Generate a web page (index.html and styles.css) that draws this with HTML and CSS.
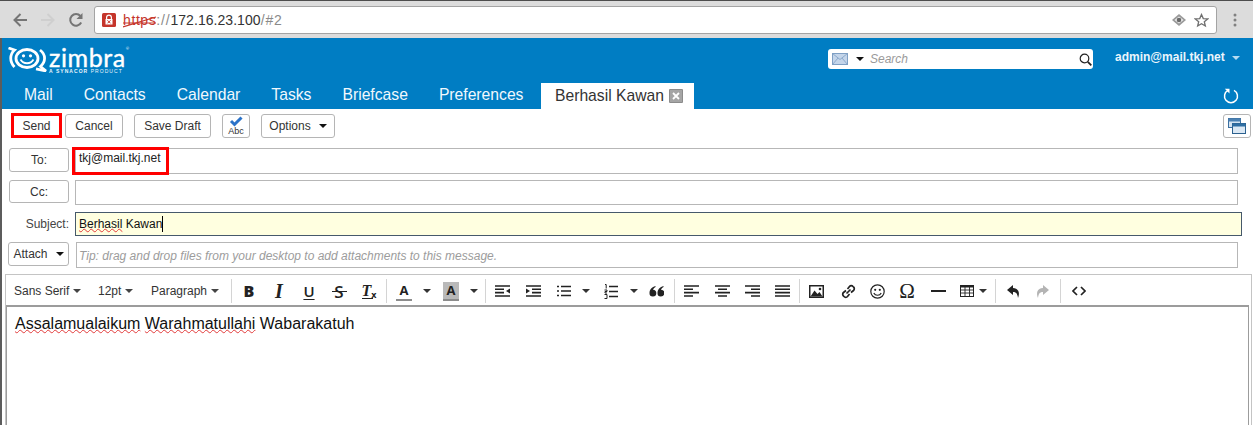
FILE: index.html
```html
<!DOCTYPE html>
<html lang="en">
<head>
<meta charset="utf-8">
<title>Zimbra</title>
<link rel="stylesheet" href="styles.css">
</head>
<body>
<header class="chrome">
  <svg class="nav-icon" viewBox="0 0 16 16" width="16" height="16"><path d="M15 8H3M8.500 2 2.500 8l6 6" fill="none" stroke="#757575" stroke-width="2"/></svg>
  <svg class="nav-icon" viewBox="0 0 16 16" width="16" height="16"><path d="M1 8H13M7.500 2l6 6-6 6" fill="none" stroke="#cfcfcf" stroke-width="2"/></svg>
  <svg class="nav-icon" viewBox="0 0 16 16" width="16" height="16"><path d="M13.200 10.500A5.800 5.800 0 1 1 12.400 4" fill="none" stroke="#757575" stroke-width="2"/><path d="M14.500 1v6h-6z" fill="#757575"/></svg>
  <div class="omnibox">
    <svg class="lock" viewBox="0 0 14 14" width="14" height="14"><rect width="14" height="14" rx="1.500" fill="#c5352b"/><path d="M4.600 6V4.600a2.400 2.400 0 0 1 4.800 0V6" fill="none" stroke="#fff" stroke-width="1.200"/><rect x="3.500" y="6" width="7" height="5.500" fill="#fff"/><path d="m5.500 7.300 3 3m0-3-3 3" stroke="#c5352b"/></svg>
    <span class="url"><span class="scheme">https<svg class="strike" viewBox="0 0 34 14" width="34" height="14"><path d="M0 13 33 3" stroke="#c5352b" stroke-width="1.200"/><path d="M0 9h33" stroke="#c5352b" stroke-width="1"/></svg></span><span class="dim dim-sep">://</span>172.16.23.100<span class="dim dim-path">/#2</span></span>
    <svg class="omni-eye" viewBox="0 0 14 12" width="14" height="12"><path d="M0 6 7 0l7 6-7 6z" fill="#9a9a9a"/><path d="M2.500 6 7 2.500 11.500 6 7 9.500z" fill="#eee"/><circle cx="7" cy="6" r="2.300" fill="#6a6a6a"/></svg>
    <svg class="omni-star" viewBox="0 0 16 16" width="15" height="15"><path d="m8 1.600 1.900 4.300 4.700.4-3.600 3 1.100 4.600L8 11.500l-4.100 2.400L5 9.300l-3.600-3 4.700-.4z" fill="none" stroke="#707070" stroke-width="1.400"/></svg>
  </div>
  <svg class="chrome-menu" viewBox="0 0 4 14" width="4" height="14"><circle cx="2" cy="2" r="1.500" fill="#808080"/><circle cx="2" cy="7" r="1.500" fill="#808080"/><circle cx="2" cy="12" r="1.500" fill="#808080"/></svg>
</header>

<div class="app">
  <div class="masthead">
    <div class="brand">
      <svg class="brand-mark" viewBox="0 0 39 25" width="39" height="25">
        <path d="M.5 1 6.500 3C1.500 7.500 1.500 15 6.500 20M32 3c6 4.500 6 11.500.5 16.500L38 24l-10-2.200" fill="none" stroke="#fff" stroke-width="2.800"/>
        <ellipse cx="19" cy="11.500" rx="11" ry="9" fill="none" stroke="#fff" stroke-width="2.800"/>
        <circle cx="15.500" cy="8.800" r="1.600" fill="#fff"/><circle cx="22.500" cy="8.800" r="1.600" fill="#fff"/>
        <path d="M12.500 12.500c3 5 10 5 13 0" fill="none" stroke="#fff" stroke-width="1.800"/>
      </svg>
      <div class="brand-text">
        <div class="brand-name">zimbra<span class="brand-reg">®</span></div>
        <div class="brand-sub">A SYNACOR <span class="brand-light">PRODUCT</span></div>
      </div>
    </div>
    <div class="search">
      <svg class="search-mail" viewBox="0 0 16 12" width="16" height="12"><rect x=".5" y=".5" width="15" height="11" fill="#c4d5ea" stroke="#7f9fc4"/><path d="m.5.5 7.500 6 7.500-6M.5 11.500l5.500-6.500M15.500 11.500 10 5" fill="none" stroke="#7f9fc4" stroke-width=".8"/></svg>
      <span class="caret caret-search"></span>
      <span class="search-text">Search</span>
      <svg class="search-glass" viewBox="0 0 13 13" width="13" height="13"><circle cx="5.500" cy="5.500" r="4.300" fill="none" stroke="#222" stroke-width="1.200"/><path d="m8.800 8.800 3.500 3.500" stroke="#222" stroke-width="1.800"/></svg>
    </div>
    <div class="account">admin@mail.tkj.net<span class="caret caret-account"></span></div>
  </div>
  <nav class="tabs">
    <span class="tab">Mail</span>
    <span class="tab">Contacts</span>
    <span class="tab">Calendar</span>
    <span class="tab">Tasks</span>
    <span class="tab">Briefcase</span>
    <span class="tab">Preferences</span>
    <span class="tab tab-active">Berhasil Kawan<span class="tab-close"><svg viewBox="0 0 14 14" width="14" height="14"><rect width="14" height="14" rx="1" fill="#8c8c8c"/><rect x="1" y="1" width="12" height="12" fill="#a5a5a5"/><path d="m4 4 6 6m0-6-6 6" stroke="#fff" stroke-width="1.800"/></svg></span></span>
    <svg class="refresh" viewBox="0 0 16 16" width="16" height="16"><path d="M5 2.400a6.500 6.500 0 1 0 6 0" fill="none" stroke="#fff" stroke-width="1.500"/><path d="M1.800 .8h4.700v4.600z" fill="#fff"/></svg>
  </nav>

  <div class="toolbar">
    <button class="btn btn-send">Send</button>
    <button class="btn btn-cancel">Cancel</button>
    <button class="btn btn-draft">Save Draft</button>
    <button class="btn btn-spell"><svg viewBox="0 0 20 20" width="20" height="20"><path d="m5 5 3.500 3.500L15.500 1.500" fill="none" stroke="#2b73c9" stroke-width="3"/><text x="10" y="18" class="abc">Abc</text></svg></button>
    <button class="btn btn-options">Options<span class="caret"></span></button>
    <button class="btn btn-window"><svg viewBox="0 0 18 16" width="18" height="16"><rect x=".5" y=".5" width="12" height="9" fill="#d5e4f2" stroke="#3c6f9f"/><rect x=".5" y=".5" width="12" height="3" fill="#4b81b3"/><rect x="4.500" y="5.500" width="13" height="10" fill="#dbe8f4" stroke="#2b618f"/><rect x="4.500" y="5.500" width="13" height="3" fill="#2f6ea3"/></svg></button>
  </div>

  <form class="fields">
    <div class="row">
      <button type="button" class="btn btn-label">To:</button>
      <div class="field field-to"><span class="field-text">tkj@mail.tkj.net</span><span class="hl hl-to"></span></div>
    </div>
    <div class="row">
      <button type="button" class="btn btn-label btn-cc">Cc:</button>
      <div class="field field-cc"></div>
    </div>
    <div class="row row-subject">
      <span class="subject-label">Subject:</span>
      <div class="field field-subject"><span class="misspelled">Berhasil</span>&nbsp;Kawan<span class="cursor"></span></div>
    </div>
    <div class="row">
      <button type="button" class="btn btn-attach">Attach<span class="caret"></span></button>
      <div class="field field-tip">Tip: drag and drop files from your desktop to add attachments to this message.</div>
    </div>
  </form>

  <section class="editor">
    <div class="mce-bar">
      <span class="mce-select mce-font">Sans Serif<span class="caret caret-grey"></span></span>
      <span class="mce-select mce-size">12pt<span class="caret caret-grey"></span></span>
      <span class="mce-select mce-block">Paragraph<span class="caret caret-grey"></span></span>
      <i class="sep"></i>
      <span class="slot s30 first t-b">B</span>
      <span class="slot s30 t-i">I</span>
      <span class="slot s30 t-u">U</span>
      <span class="slot s30 t-s">S</span>
      <span class="slot s30 t-x">T<small>x</small></span>
      <i class="sep after2"></i>
      <span class="slot s34"><span class="a-letter">A</span></span>
      <span class="slot s12"><span class="caret caret-icon"></span></span>
      <span class="slot s36"><span class="a-letter a-bg">A</span></span>
      <span class="slot s10"><span class="caret caret-icon"></span></span>
      <i class="sep after6"></i>
      <span class="slot s32"><svg viewBox="0 0 15 12" width="15" height="12"><path d="M0 1h15M0 4.300h9M0 7.600h9M0 11h15" stroke="#222" stroke-width="1.600"/><path d="M15 3.500v5L11 6z" fill="#222"/></svg></span>
      <span class="slot s30"><svg viewBox="0 0 15 12" width="15" height="12"><path d="M0 1h15M6 4.300h9M6 7.600h9M0 11h15" stroke="#222" stroke-width="1.600"/><path d="M0 3.500v5L4 6z" fill="#222"/></svg></span>
      <span class="slot s32"><svg viewBox="0 0 14 12" width="14" height="12"><path d="M4 1.500h10M4 6h10M4 10.500h10" stroke="#222" stroke-width="1.600"/><path d="M0 1.500h2M0 6h2M0 10.500h2" stroke="#222" stroke-width="1.600"/></svg></span>
      <span class="slot s12"><span class="caret caret-icon"></span></span>
      <span class="slot s38"><svg viewBox="0 0 14 15" width="14" height="15"><path d="M5 2.500h9M5 7.500h9M5 12.500h9" stroke="#222" stroke-width="1.600"/><path d="M1 .5h1.200v4M.5 6h2.500v1.500H1v1.500h2M.5 10.500H3v4H.5" fill="none" stroke="#222"/></svg></span>
      <span class="slot s8"><span class="caret caret-icon"></span></span>
      <span class="slot s36"><svg viewBox="0 0 15 11" width="15" height="11"><path d="M6.500 0C3 1 .5 3.500.5 7a3.400 3.400 0 1 0 3.500-3.300c.7-1.400 1.500-2.200 2.500-2.700zM14.500 0c-3.500 1-6 3.500-6 7a3.400 3.400 0 1 0 3.500-3.300c.7-1.400 1.500-2.200 2.500-2.700z" fill="#222"/></svg></span>
      <i class="sep"></i>
      <span class="slot s32"><svg viewBox="0 0 15 12" width="15" height="12"><path d="M0 1h15M0 4.300h9M0 7.600h15M0 11h9" stroke="#222" stroke-width="1.600"/></svg></span>
      <span class="slot s30"><svg viewBox="0 0 15 12" width="15" height="12"><path d="M0 1h15M3 4.300h9M0 7.600h15M3 11h9" stroke="#222" stroke-width="1.600"/></svg></span>
      <span class="slot s30"><svg viewBox="0 0 15 12" width="15" height="12"><path d="M0 1h15M6 4.300h9M0 7.600h15M6 11h9" stroke="#222" stroke-width="1.600"/></svg></span>
      <span class="slot s30"><svg viewBox="0 0 15 12" width="15" height="12"><path d="M0 1h15M0 4.300h15M0 7.600h15M0 11h15" stroke="#222" stroke-width="1.600"/></svg></span>
      <i class="sep after2"></i>
      <span class="slot s33"><svg viewBox="0 0 15 13" width="15" height="13"><rect width="15" height="13" fill="#222"/><rect x="1.500" y="1.500" width="12" height="10" fill="#fff"/><path d="m1.500 11.500 4-6 3 3.500 2-2 3 4.500z" fill="#222"/><circle cx="11" cy="4" r="1.300" fill="#222"/></svg></span>
      <span class="slot s30"><svg viewBox="0 0 15 15" width="15" height="15"><path d="m6.500 5 2-2.500a2.300 2.300 0 0 1 3.500 0l.5.500a2.300 2.300 0 0 1 0 3.500L10 8.500M8.500 10l-2 2.500a2.300 2.300 0 0 1-3.500 0l-.5-.5a2.300 2.300 0 0 1 0-3.500L5 6.500M5.500 9.500l4-4" fill="none" stroke="#222" stroke-width="1.700"/></svg></span>
      <span class="slot s28"><svg viewBox="0 0 15 15" width="15" height="15"><circle cx="7.500" cy="7.500" r="6.700" fill="none" stroke="#222" stroke-width="1.200"/><circle cx="5.200" cy="5.800" r="1.100" fill="#222"/><circle cx="9.800" cy="5.800" r="1.100" fill="#222"/><path d="M3.800 9c1.500 3 6 3 7.400 0" fill="none" stroke="#222" stroke-width="1.200"/></svg></span>
      <span class="slot s32 omega">Ω</span>
      <span class="slot s30"><span class="hr-ico"></span></span>
      <svg class="table-ico" viewBox="0 0 14 12" width="14" height="12"><rect x=".5" y=".5" width="13" height="11" fill="none" stroke="#222"/><path d="M0 1.500h14" stroke="#222" stroke-width="2"/><path d="M0 5h14M0 8h14M5 0v12M9.500 0v12" stroke="#222" stroke-width=".9"/></svg>
      <span class="caret caret-icon caret-table"></span>
      <i class="sep"></i>
      <span class="slot s35"><svg viewBox="0 0 13 13" width="13" height="13"><path d="M6 0 0 5l6 5V7c3 0 4.500 1.500 5 6 2-5 1-9.500-5-10z" fill="#222"/></svg></span>
      <span class="slot s23"><svg viewBox="0 0 13 13" width="13" height="13"><path d="m7 0 6 5-6 5V7c-3 0-4.500 1.500-5 6-2-5-1-9.500 5-10z" fill="#b4b4b4"/></svg></span>
      <i class="sep after6"></i>
      <span class="slot s35"><svg viewBox="0 0 14 10" width="14" height="10"><path d="M5 1 1 5l4 4M9 1l4 4-4 4" fill="none" stroke="#222" stroke-width="1.700"/></svg></span>
    </div>
    <div class="mce-body"><span class="misspelled">Assalamualaikum</span> <span class="misspelled">Warahmatullahi</span> Wabarakatuh</div>
  </section>
  <span class="hl hl-send"></span>
</div>
</body>
</html>
```
FILE: styles.css
```css
* { box-sizing: border-box; }
html, body { margin: 0; padding: 0; height: 425px; overflow: hidden; background: #fff; }
body { font-family: "Liberation Sans", Arial, sans-serif; color: #333; }
button { font-family: inherit; margin: 0; cursor: default; }

.chrome { height: 38px; background: #dcdcdc; border-top: 1px solid #4d4d4d; display: flex; align-items: center; padding-left: 12px; }
.nav-icon { margin-right: 12px; flex: none; }
.omnibox { flex: none; margin-left: -2px; margin-top: 1px; width: 1123px; height: 28px; background: #fff; border: 1px solid #a4a4a4; border-radius: 3px; display: flex; align-items: center; padding-left: 7px; }
.lock { flex: none; }
.url { font-size: 14px; letter-spacing: .05px; color: #333; margin-left: 7px; }
.scheme { position: relative; color: #c5352b; letter-spacing: .6px; }
.strike { position: absolute; left: 0; top: 2px; }
.dim { color: #8a8a8a; }
.dim-sep { letter-spacing: .8px; }
.dim-path { letter-spacing: .9px; }
.omni-eye { margin-left: auto; margin-right: 8px; }
.omni-star { margin-right: 7px; }
.chrome-menu { margin-left: 16px; flex: none; }

.app { border-left: 2px solid #5c5c5c; height: 387px; position: relative; display: flex; flex-direction: column; }
.masthead { height: 39px; flex: none; background: #007dc3; display: flex; align-items: flex-start; padding-left: 6px; padding-top: 9px; }
.brand { display: flex; align-items: flex-start; gap: 2px; width: 120px; flex: none; }
.brand-mark { flex: none; }
.brand-name { color: #fff; font-family: Lato, "Liberation Sans", sans-serif; font-size: 25px; line-height: 20px; height: 22px; letter-spacing: .6px; white-space: nowrap; -webkit-text-stroke: .4px #fff; }
.brand-reg { font-size: 4px; line-height: 4px; vertical-align: top; -webkit-text-stroke: 0; }
.brand-sub { color: #eaf5fc; font-size: 5px; line-height: 5px; font-weight: bold; letter-spacing: 1.050px; white-space: nowrap; }
.brand-light { font-weight: normal; }
.search { margin-left: 700px; margin-top: 2px; width: 265px; height: 20px; background: #fff; border-radius: 3px; display: flex; align-items: center; padding-left: 4px; flex: none; }
.search-mail { flex: none; }
.search-text { font-size: 12px; font-style: italic; color: #9a9a9a; margin-left: 6px; }
.search-glass { margin-left: auto; margin-right: 1px; }
.account { color: #eaf5fc; font-size: 12px; font-weight: bold; margin-left: 22px; margin-top: 3px; white-space: nowrap; display: flex; align-items: center; }

.caret { display: inline-block; flex: none; width: 0; height: 0; border-left: 4px solid transparent; border-right: 4px solid transparent; border-top: 4px solid #111; }
.caret-search { margin-left: 8px; }
.caret-account { margin-left: 7px; border-top-color: #b5dcf2; margin-top: 2px; }

.tabs { height: 32px; flex: none; background: #007dc3; display: flex; align-items: flex-start; padding-left: 6.500px; }
.tab { color: #f1f8fd; font-size: 15.700px; line-height: 36px; padding: 0 15.500px; white-space: nowrap; }
.tab-active { background: #fff; color: #333; height: 26px; line-height: 26px; margin-top: 6px; margin-left: 2px; padding: 0 11px 0 14px; display: flex; align-items: center; }
.tab-close { display: flex; margin-left: 5px; }
.refresh { margin: 11px 14px 0 auto; flex: none; }

.toolbar { height: 33px; flex: none; display: flex; align-items: flex-start; padding-left: 11px; padding-top: 5px; }
.btn { background: #fff; border: 1px solid #b5b5b5; border-radius: 3px; color: #333; font-size: 12px; padding: 0; height: 24px; flex: none; }
.btn-send { width: 47px; margin-right: 5px; }
.btn-cancel { width: 58px; margin-right: 11px; }
.btn-draft { width: 77px; margin-right: 11px; }
.btn-spell { width: 28px; margin-right: 11px; display: flex; align-items: center; justify-content: center; }
.abc { font: 9px "Liberation Sans", sans-serif; fill: #333; text-anchor: middle; }
.btn-options { width: 74px; display: flex; align-items: center; justify-content: center; gap: 8px; }
.btn-window { width: 28px; margin-left: auto; margin-right: 2px; display: flex; align-items: center; justify-content: center; }

.fields { flex: none; display: flex; flex-direction: column; padding: 6px 15px 0 0; }
.row { display: flex; align-items: flex-start; height: 32px; }
.row-subject { height: 30px; }
.btn-label { width: 60px; margin-left: 7px; }
.btn-cc { height: 23px; }
.field { flex: 1; height: 26px; margin-left: 6px; border: 1px solid #b7b7b7; font-size: 12px; color: #111; padding-left: 3px; display: flex; align-items: center; position: relative; }
.field-to { align-items: flex-start; padding-top: 2px; }
.field-cc { height: 25px; }
.field-text { color: #222; }
.subject-label { width: 60px; margin: 5px 0 0 7px; text-align: right; font-size: 12px; color: #444; flex: none; }
.field-subject { flex: none; width: 1167px; height: 24px; background: #ffffe0; border-color: #46596b; }
.cursor { width: 1px; height: 16px; background: #000; }
.btn-attach { width: 61px; margin-left: 6px; display: flex; align-items: center; justify-content: center; gap: 8px; color: #333; }
.field-tip { margin-left: 7px; padding-left: 2px; padding-top: 1px; color: #9c9c9c; font-style: italic; }
.misspelled { text-decoration: underline wavy #e23b3b 1px; text-underline-offset: 0; }

.hl { position: absolute; border: 3px solid #f00; pointer-events: none; }
.hl-to { left: -4px; top: -2px; width: 97px; height: 28px; }
.hl-send { left: 9px; top: 75px; width: 51px; height: 25px; }

.editor { flex: 1; min-height: 0; margin: 0 1px 0 3px; border: solid #c4c4c4; border-width: 1px 1px 0; display: flex; flex-direction: column; }
.mce-bar { height: 32px; flex: none; display: flex; align-items: center; padding: 2px 0 0 8px; font-size: 12px; color: #333; border-bottom: 2px solid #9c9c9c; margin-right: 2px; }
.mce-select { display: flex; align-items: center; gap: 4px; flex: none; }
.mce-font { width: 84px; }
.mce-size { width: 53px; }
.mce-block { width: 80px; }
.caret-grey { border-top-color: #444; }
.sep { width: 1px; height: 24px; background: #d4d4d4; flex: none; }
.after2 { margin-left: 2px; }
.after6 { margin-left: 6px; }

.slot { display: flex; align-items: center; justify-content: center; flex: none; height: 22px; color: #222; position: relative; }
.first { margin-left: 2px; }
.s8 { width: 8px; } .s10 { width: 10px; } .s12 { width: 12px; } .s23 { width: 23px; }
.s28 { width: 28px; } .s30 { width: 30px; } .s32 { width: 32px; } .s33 { width: 33px; }
.s34 { width: 34px; } .s35 { width: 35px; } .s36 { width: 36px; } .s38 { width: 38px; }
.caret-icon { border-top-color: #333; }

.t-b { font-family: "Open Sans", sans-serif; font-weight: 800; font-size: 16px; }
.t-i { font-family: "Liberation Serif", serif; font-style: italic; font-weight: 700; font-size: 20px; }
.t-u { font-family: "Open Sans", sans-serif; font-weight: 600; font-size: 15px; text-decoration: underline; text-underline-offset: 2px; }
.t-s { font-family: "Open Sans", sans-serif; font-weight: 600; font-size: 17px; }
.t-s::after { content: ""; position: absolute; left: 8px; top: 11px; width: 15px; height: 1px; background: #222; }
.t-x { font-family: "Liberation Serif", serif; font-style: italic; font-weight: 700; font-size: 16px; }
.t-x::after { content: ""; position: absolute; left: 8px; top: 18px; width: 11px; height: 1px; background: #222; }
.t-x small { font-family: "Open Sans", sans-serif; font-size: 9px; font-style: normal; margin-top: 7px; }
.a-letter { display: block; width: 16px; height: 19px; font-family: "Open Sans", sans-serif; font-weight: 700; font-size: 13px; text-align: center; line-height: 16px; border-bottom: 2px solid #8c8c8c; }
.a-bg { background: #b9b9b9; }
.omega { font-family: "Liberation Serif", serif; font-size: 21px; }
.hr-ico { width: 15px; height: 2px; background: #222; }
.table-ico { flex: none; margin-left: 7px; }
.caret-table { margin-left: 5px; margin-right: 8px; }

.mce-body { flex: 1; min-height: 0; margin-right: 2px; padding: 8px 8px; font-size: 16px; color: #111; border: solid #9c9c9c; border-width: 0 1px; }
```
